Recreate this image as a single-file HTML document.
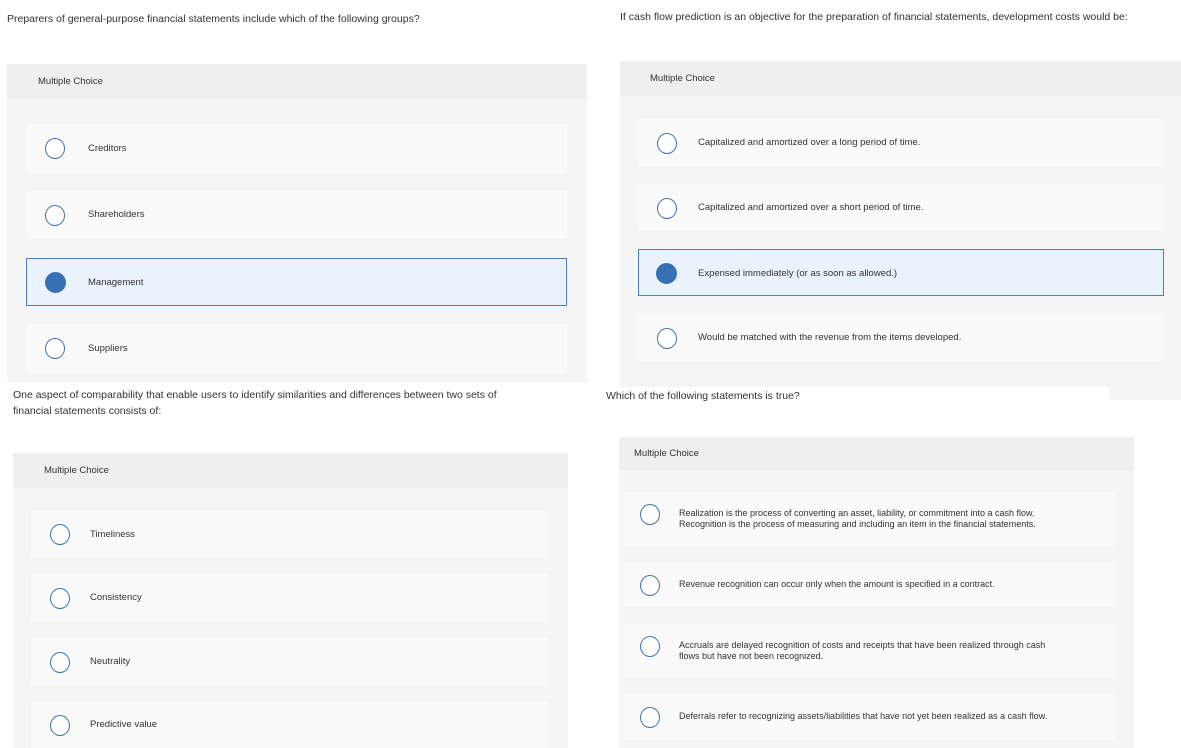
<!DOCTYPE html>
<html><head><style>
body{margin:0;width:1181px;height:748px;background:#fff;position:relative;overflow:hidden;font-family:"Liberation Sans",sans-serif;color:#333}
.a{position:absolute}
.q{font-size:10.5px;line-height:16px;color:#333}
.h{background:#efefef;font-size:9.5px;box-sizing:border-box}
.b{background:#f5f5f5}
.o{background:#fafafa;box-sizing:border-box;font-size:9.5px}
.s{background:#eaf2fb;border:1px solid #4a7fc1}
.c{position:absolute;width:20px;height:21px;border:1.5px solid #3d71b0;border-radius:50%;box-sizing:border-box;background:#fff}
.s .c{background:#3871b3;border-color:#3871b3;width:21px;height:21px}
.t{position:absolute;line-height:11px}
</style></head><body>
<div class="a q" style="left:7px;top:11px">Preparers of general-purpose financial statements include which of the following groups?</div>
<div class="a q" style="left:620px;top:9px">If cash flow prediction is an objective for the preparation of financial statements, development costs would be:</div>

<div class="a b" style="left:7px;top:99px;width:580px;height:283px"></div>
<div class="a h" style="left:7px;top:64px;width:580px;height:35px;padding:12px 0 0 31px">Multiple Choice</div>
<div class="a o" style="left:26px;top:124px;width:541px;height:49px"><div class="c" style="left:19px;top:14px"></div><div class="t" style="left:62px;top:19px">Creditors</div></div>
<div class="a o" style="left:26px;top:191px;width:541px;height:48px"><div class="c" style="left:19px;top:14px"></div><div class="t" style="left:62px;top:18px">Shareholders</div></div>
<div class="a o s" style="left:26px;top:258px;width:541px;height:48px"><div class="c" style="left:18px;top:13px"></div><div class="t" style="left:61px;top:18px">Management</div></div>
<div class="a o" style="left:26px;top:324px;width:541px;height:49px"><div class="c" style="left:19px;top:14px"></div><div class="t" style="left:62px;top:19px">Suppliers</div></div>

<div class="a b" style="left:620px;top:96px;width:561px;height:304px"></div>
<div class="a h" style="left:620px;top:61px;width:561px;height:35px;padding:12px 0 0 30px">Multiple Choice</div>
<div class="a o" style="left:638px;top:119px;width:526px;height:48px"><div class="c" style="left:19px;top:14px"></div><div class="t" style="left:60px;top:18px">Capitalized and amortized over a long period of time.</div></div>
<div class="a o" style="left:638px;top:184px;width:526px;height:47px"><div class="c" style="left:19px;top:14px"></div><div class="t" style="left:60px;top:18px">Capitalized and amortized over a short period of time.</div></div>
<div class="a o s" style="left:638px;top:249px;width:526px;height:47px"><div class="c" style="left:17px;top:13px"></div><div class="t" style="left:59px;top:18px">Expensed immediately (or as soon as allowed.)</div></div>
<div class="a o" style="left:638px;top:314px;width:526px;height:47px"><div class="c" style="left:19px;top:14px"></div><div class="t" style="left:60px;top:18px">Would be matched with the revenue from the items developed.</div></div>

<div class="a" style="left:600px;top:387px;width:509px;height:20px;background:#fff"></div>
<div class="a q" style="left:13px;top:387px;width:525px">One aspect of comparability that enable users to identify similarities and differences between two sets of financial statements consists of:</div>
<div class="a q" style="left:606px;top:388px">Which of the following statements is true?</div>

<div class="a b" style="left:13px;top:488px;width:555px;height:260px"></div>
<div class="a h" style="left:13px;top:453px;width:555px;height:35px;padding:12px 0 0 31px">Multiple Choice</div>
<div class="a o" style="left:31px;top:511px;width:518px;height:46px"><div class="c" style="left:19px;top:13px"></div><div class="t" style="left:59px;top:18px">Timeliness</div></div>
<div class="a o" style="left:31px;top:574px;width:518px;height:47px"><div class="c" style="left:19px;top:14px"></div><div class="t" style="left:59px;top:18px">Consistency</div></div>
<div class="a o" style="left:31px;top:638px;width:518px;height:47px"><div class="c" style="left:19px;top:14px"></div><div class="t" style="left:59px;top:18px">Neutrality</div></div>
<div class="a o" style="left:31px;top:702px;width:518px;height:46px"><div class="c" style="left:19px;top:13px"></div><div class="t" style="left:59px;top:17px">Predictive value</div></div>

<div class="a b" style="left:619px;top:470px;width:515px;height:278px"></div>
<div class="a h" style="left:619px;top:437px;width:515px;height:33px;padding:11px 0 0 15px">Multiple Choice</div>
<div class="a o" style="left:624px;top:492px;width:491px;height:54px;font-size:9px"><div class="c" style="left:16px;top:12px"></div><div class="t" style="left:55px;top:16px">Realization is the process of converting an asset, liability, or commitment into a cash flow.<br>Recognition is the process of measuring and including an item in the financial statements.</div></div>
<div class="a o" style="left:624px;top:563px;width:491px;height:44px;font-size:9px"><div class="c" style="left:16px;top:12px"></div><div class="t" style="left:55px;top:16px">Revenue recognition can occur only when the amount is specified in a contract.</div></div>
<div class="a o" style="left:624px;top:624px;width:491px;height:53px;font-size:9px"><div class="c" style="left:16px;top:12px"></div><div class="t" style="left:55px;top:16px">Accruals are delayed recognition of costs and receipts that have been realized through cash<br>flows but have not been recognized.</div></div>
<div class="a o" style="left:624px;top:694px;width:491px;height:46px;font-size:9px"><div class="c" style="left:16px;top:13px"></div><div class="t" style="left:55px;top:17px">Deferrals refer to recognizing assets/liabilities that have not yet been realized as a cash flow.</div></div>
</body></html>
